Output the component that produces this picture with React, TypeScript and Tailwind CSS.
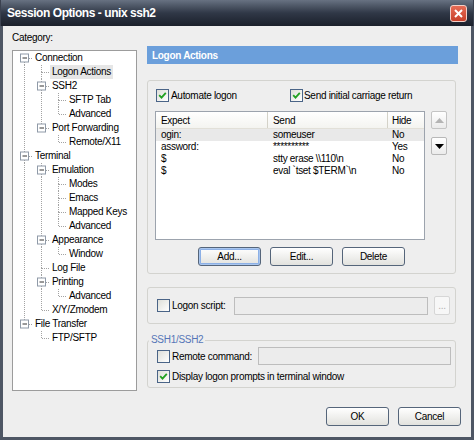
import React from 'react';

type Node = { level: number; label: string; kids?: boolean; selected?: boolean };

const tree: Node[] = [
  { level: 0, label: 'Connection', kids: true },
  { level: 1, label: 'Logon Actions', selected: true },
  { level: 1, label: 'SSH2', kids: true },
  { level: 2, label: 'SFTP Tab' },
  { level: 2, label: 'Advanced' },
  { level: 1, label: 'Port Forwarding', kids: true },
  { level: 2, label: 'Remote/X11' },
  { level: 0, label: 'Terminal', kids: true },
  { level: 1, label: 'Emulation', kids: true },
  { level: 2, label: 'Modes' },
  { level: 2, label: 'Emacs' },
  { level: 2, label: 'Mapped Keys' },
  { level: 2, label: 'Advanced' },
  { level: 1, label: 'Appearance', kids: true },
  { level: 2, label: 'Window' },
  { level: 1, label: 'Log File' },
  { level: 1, label: 'Printing', kids: true },
  { level: 2, label: 'Advanced' },
  { level: 1, label: 'X/Y/Zmodem' },
  { level: 0, label: 'File Transfer', kids: true },
  { level: 1, label: 'FTP/SFTP' },
];

const rows = [
  ['ogin:', 'someuser', 'No'],
  ['assword:', '**********', 'Yes'],
  ['$', 'stty erase \\\\110\\n', 'No'],
  ['$', 'eval `tset $TERM`\\n', 'No'],
];

// does the item at level `lvl` seen from row k have a following sibling
function hasNext(k: number, lvl: number) {
  for (let j = k + 1; j < tree.length; j++) {
    if (tree[j].level < lvl) return false;
    if (tree[j].level === lvl) return true;
  }
  return false;
}

const dot = { stroke: '#a3a3a3', strokeWidth: 1, strokeDasharray: '1 1' };

function TreeCell({ k, lvl, own }: { k: number; lvl: number; own: boolean }) {
  const n = tree[k];
  const next = hasNext(k, lvl);
  return (
    <svg width="17" height="14" className="shrink-0">
      {!own && next && <line x1="8.5" y1="0" x2="8.5" y2="14" {...dot} />}
      {own && (k > 0 || n.level > 0) && <line x1="8.5" y1="0" x2="8.5" y2="7" {...dot} />}
      {own && next && <line x1="8.5" y1="7" x2="8.5" y2="14" {...dot} />}
      {own && <line x1="9" y1="7.5" x2="17" y2="7.5" {...dot} />}
      {own && n.kids && (
        <>
          <rect x="4.5" y="3" width="8" height="8" fill="white" stroke="#8f9aa8" />
          <line x1="6.5" y1="7" x2="11" y2="7" stroke="#333" />
        </>
      )}
    </svg>
  );
}

function Check({ checked }: { checked?: boolean }) {
  return (
    <span className="w-[13px] h-[13px] border border-[#4a6487] bg-gradient-to-br from-[#dedfd9] to-white flex items-center justify-center shrink-0">
      {checked && (
        <svg width="9" height="9" viewBox="0 0 9 9">
          <path d="M1.2 4.2 L3.5 6.6 L7.8 1.8" stroke="#21a121" strokeWidth="1.8" fill="none" />
        </svg>
      )}
    </span>
  );
}

function Btn({ children, focus }: { children: React.ReactNode; focus?: boolean }) {
  return (
    <div
      className={
        'w-[63px] h-[19px] rounded-[3px] border border-[#55657a] bg-gradient-to-b from-white to-[#e2e2de] flex items-center justify-center text-black ' +
        (focus ? 'shadow-[inset_0_0_0_1px_#a9c6ef,inset_0_0_0_2px_#8cb0e6]' : '')
      }
    >
      {children}
    </div>
  );
}

export default function App() {
  return (
    <div className="w-[474px] h-[440px] flex flex-col font-['Liberation_Sans',Arial,sans-serif] text-[10px] tracking-[-0.3px] text-black select-none">
      {/* Title bar */}
      <div className="h-[26px] shrink-0 flex items-center justify-between pl-[6px] pr-[6px] bg-gradient-to-b from-[#687282] via-[#303847] to-[#1b202b] border-x border-[#3b4250]">
        <span className="text-white font-bold text-[12px] tracking-[-0.45px]">Session Options - unix ssh2</span>
        <div className="w-[17px] h-[17px] rounded-[3px] border border-[#f4d0c8] bg-gradient-to-b from-[#e66b55] to-[#c8402a] flex items-center justify-center">
          <svg width="9" height="9" viewBox="0 0 9 9">
            <path d="M1 1 L8 8 M8 1 L1 8" stroke="white" strokeWidth="2" />
          </svg>
        </div>
      </div>

      {/* Body */}
      <div className="flex-1 flex bg-[#eeeeee] border-x-[3px] border-b-[3px] border-[#4e5664] pl-[9px]">
        {/* Left column */}
        <div className="w-[125px] shrink-0 flex flex-col pt-[5px]">
          <div className="leading-[14px]">Category:</div>
          <div className="mt-[5px] h-[341px] bg-white border border-[#9c9c9c] pl-[3px] flex flex-col">
            {tree.map((n, k) => (
              <div key={k} className="h-[14px] flex items-center">
                {Array.from({ length: n.level }, (_, i) => (
                  <TreeCell key={i} k={k} lvl={i} own={false} />
                ))}
                <TreeCell k={k} lvl={n.level} own />
                <span className={'px-[2px] leading-[14px] whitespace-nowrap ' + (n.selected ? 'bg-[#e6e6e6]' : '')}>
                  {n.label}
                </span>
              </div>
            ))}
          </div>
        </div>

        {/* Right column */}
        <div className="w-[314px] ml-[10px] flex flex-col pt-[20px]">
          <div className="w-[311px] h-[18px] bg-[#6b9fdb] text-white font-bold flex items-center pl-[5px]">
            Logon Actions
          </div>

          {/* Group 1 */}
          <div className="w-[309px] h-[194px] mt-[16px] rounded-[3px] border border-[#d3d3cf] flex flex-col">
            <div className="h-[13px] mt-[8px] flex items-center">
              <div className="ml-[8px] flex items-center gap-[2px] w-[134px]">
                <Check checked />
                <span>Automate logon</span>
              </div>
              <div className="flex items-center gap-[1px]">
                <Check checked />
                <span>Send initial carriage return</span>
              </div>
            </div>

            <div className="flex mt-[9px] ml-[7px]">
              <div className="w-[270px] h-[129px] bg-white border border-[#9ca3ad] flex flex-col">
                <div className="h-[17px] flex border-b border-[#e2e0d8] bg-gradient-to-b from-white to-[#f4f4f0]">
                  <div className="w-[112px] pl-[5px] flex items-center border-r border-[#d4d2c8]">Expect</div>
                  <div className="w-[120px] pl-[5px] flex items-center border-r border-[#d4d2c8]">Send</div>
                  <div className="flex-1 pl-[4px] flex items-center">Hide</div>
                </div>
                {rows.map((r, i) => (
                  <div key={i} className={'h-[12px] flex items-center leading-[12px] ' + (i === 0 ? 'bg-[#e9e9e9]' : '')}>
                    <div className="w-[112px] pl-[5px]">{r[0]}</div>
                    <div className="w-[120px] pl-[5px]">{r[1]}</div>
                    <div className="flex-1 pl-[4px]">{r[2]}</div>
                  </div>
                ))}
              </div>
              <div className="ml-[6px] flex flex-col gap-[8px]">
                <div className="w-[16px] h-[18px] rounded-[2px] border border-[#c4c4c4] bg-gradient-to-b from-white to-[#ebebeb] flex items-center justify-center">
                  <svg width="9" height="5" viewBox="0 0 9 5"><path d="M0 5 L4.5 0 L9 5 Z" fill="#b4b4b4" /></svg>
                </div>
                <div className="w-[16px] h-[18px] rounded-[2px] border border-[#b8b8b8] bg-gradient-to-b from-white to-[#ebebeb] flex items-center justify-center">
                  <svg width="9" height="5" viewBox="0 0 9 5"><path d="M0 0 L9 0 L4.5 5 Z" fill="#000" /></svg>
                </div>
              </div>
            </div>

            <div className="mt-[7px] flex justify-center gap-[9px]">
              <Btn focus>Add...</Btn>
              <Btn>Edit...</Btn>
              <Btn>Delete</Btn>
            </div>
          </div>

          {/* Group 2 */}
          <div className="w-[309px] h-[37px] mt-[13px] rounded-[3px] border border-[#d3d3cf] flex items-center pl-[9px]">
            <Check />
            <span className="ml-[2px] w-[62px]">Logon script:</span>
            <div className="w-[194px] h-[18px] bg-[#ececec] border border-[#bdbdbd]" />
            <div className="ml-[6px] w-[16px] h-[19px] bg-[#f7f7f7] border border-[#d6d6d6] rounded-[2px] flex items-center justify-center text-[#b0b0b0] leading-none">
              ...
            </div>
          </div>

          {/* Group 3 */}
          <fieldset className="w-[309px] mt-[10px] rounded-[3px] border border-[#d3d3cf] pl-[9px] pb-[4px]">
            <legend className="ml-[-8px] px-[2px] leading-[12px] text-[#5676b8]">SSH1/SSH2</legend>
            <div className="h-[18px] mt-[1px] flex items-center">
              <Check />
              <span className="ml-[2px] w-[86px]">Remote command:</span>
              <div className="w-[193px] h-[18px] bg-[#ececec] border border-[#bdbdbd]" />
            </div>
            <div className="h-[14px] mt-[4px] flex items-center">
              <Check checked />
              <span className="ml-[2px]">Display logon prompts in terminal window</span>
            </div>
          </fieldset>

          <div className="mt-[19px] flex justify-end gap-[9px]">
            <Btn>OK</Btn>
            <Btn>Cancel</Btn>
          </div>
        </div>
      </div>
    </div>
  );
}
